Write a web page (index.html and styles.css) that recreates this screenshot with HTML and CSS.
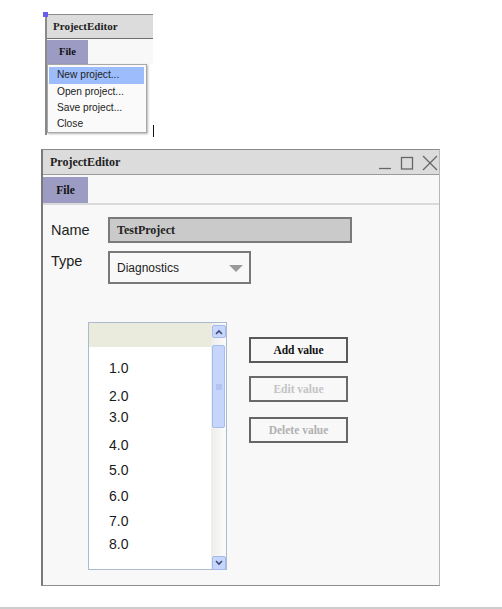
FILE: index.html
```html
<!DOCTYPE html>
<html>
<head>
<meta charset="utf-8">
<link rel="stylesheet" href="styles.css">
</head>
<body>
<div class="mini">
  <span class="handle"></span>
  <div class="mini-title">ProjectEditor</div>
  <div class="mini-menubar"><span class="mini-file">File</span></div>
  <div class="dropdown">
    <div class="dd-item active">New project...</div>
    <div class="dd-item">Open project...</div>
    <div class="dd-item">Save project...</div>
    <div class="dd-item">Close</div>
  </div>
  <span class="caret"></span>
</div>

<div class="window">
  <div class="titlebar">
    <span class="title">ProjectEditor</span>
    <svg class="controls" width="62" height="20" viewBox="0 0 62 20">
      <line x1="3" y1="15.5" x2="15" y2="15.5" stroke="#666" stroke-width="1.3"/>
      <rect x="25.5" y="4.5" width="11" height="11.5" fill="none" stroke="#666" stroke-width="1.3"/>
      <line x1="47" y1="3" x2="61" y2="17" stroke="#666" stroke-width="1.3"/>
      <line x1="61" y1="3" x2="47" y2="17" stroke="#666" stroke-width="1.3"/>
    </svg>
  </div>
  <div class="menubar"><span class="file-btn">File</span></div>
  <div class="content">
    <div class="form-row name-row">
      <span class="label">Name</span>
      <div class="textbox">TestProject</div>
    </div>
    <div class="form-row type-row">
      <span class="label type-label">Type</span>
      <div class="select">
        <span>Diagnostics</span>
        <span class="arrow"></span>
      </div>
    </div>
    <div class="list-area">
      <div class="listbox">
        <div class="list-col">
          <div class="list-header"></div>
          <div class="item">1.0</div>
          <div class="item">2.0</div>
          <div class="item">3.0</div>
          <div class="item">4.0</div>
          <div class="item">5.0</div>
          <div class="item">6.0</div>
          <div class="item">7.0</div>
          <div class="item">8.0</div>
        </div>
        <div class="scrollbar">
          <div class="sb-btn sb-up">
            <svg width="8" height="6" viewBox="0 0 8 6"><polyline points="1,5 4,2 7,5" fill="none" stroke="#3b4a78" stroke-width="1.6"/></svg>
          </div>
          <div class="sb-thumb">
            <svg width="6" height="6" viewBox="0 0 6 6"><line x1="0" y1="1" x2="6" y2="1" stroke="#9fb2e6"/><line x1="0" y1="3" x2="6" y2="3" stroke="#9fb2e6"/><line x1="0" y1="5" x2="6" y2="5" stroke="#9fb2e6"/></svg>
          </div>
          <div class="sb-spacer"></div>
          <div class="sb-btn sb-down">
            <svg width="8" height="6" viewBox="0 0 8 6"><polyline points="1,1 4,4 7,1" fill="none" stroke="#3b4a78" stroke-width="1.6"/></svg>
          </div>
        </div>
      </div>
      <div class="buttons">
        <div class="btn btn-add">Add value</div>
        <div class="btn btn-edit">Edit value</div>
        <div class="btn btn-delete">Delete value</div>
      </div>
    </div>
  </div>
</div>
<div class="baseline"></div>
</body>
</html>
```

FILE: styles.css
```css
* { box-sizing: border-box; }
html, body { margin: 0; padding: 0; }
body {
  width: 502px;
  height: 609px;
  background: #ffffff;
  overflow: hidden;
  font-family: "Liberation Sans", Arial, sans-serif;
}

/* ---------- mini window with open menu ---------- */
.mini {
  position: relative;
  margin: 14px 0 0 45px;
  width: 108px;
  height: 121px;
  border-left: 2px solid #8a8a8a;
}
.handle {
  position: absolute;
  left: -4px;
  top: -2px;
  width: 5px;
  height: 5px;
  background: #6a5cf0;
}
.mini-title {
  height: 25px;
  background: #dcdcdc;
  border-top: 1px solid #8c8c8c;
  border-bottom: 1px solid #6e6e6e;
  padding-left: 6px;
  font-family: "Liberation Serif", "Times New Roman", serif;
  font-weight: bold;
  font-size: 11px;
  line-height: 23px;
  color: #222;
}
.mini-menubar {
  height: 25px;
  background: #f8f8f8;
  padding-top: 1px;
  display: flex;
}
.mini-file {
  width: 41px;
  height: 24px;
  background: #9b9bc3;
  font-family: "Liberation Serif", "Times New Roman", serif;
  font-weight: bold;
  font-size: 10.5px;
  line-height: 24px;
  text-align: center;
  color: #111;
}
.dropdown {
  position: absolute;
  left: 0px;
  top: 50px;
  width: 100px;
  height: 69px;
  background: #fafafa;
  border: 1px solid #a8a8a8;
  box-shadow: 1px 1px 2px rgba(0,0,0,0.3);
  padding: 2px 2px 0 1px;
}
.dd-item {
  height: 16px;
  line-height: 16px;
  padding-left: 8px;
  font-size: 10.2px;
  color: #222;
}
.dd-item.active {
  height: 16.5px;
  background: #9cbcfb;
}
.caret {
  position: absolute;
  left: 106px;
  top: 111px;
  width: 1px;
  height: 12px;
  background: #111;
}

/* ---------- main window ---------- */
.window {
  margin: 14px 0 0 41px;
  width: 399px;
  height: 437px;
  border-top: 1px solid #8a8a8a;
  border-left: 2px solid #7a7a7a;
  border-right: 1px solid #b8b8b8;
  border-bottom: 1px solid #8e8e8e;
  background: #f8f8f8;
  display: flex;
  flex-direction: column;
}
.titlebar {
  height: 25px;
  background: #dcdcdc;
  border-bottom: 1px solid #9a9a9a;
  display: flex;
  align-items: center;
  justify-content: space-between;
  padding-left: 7px;
}
.title {
  font-family: "Liberation Serif", "Times New Roman", serif;
  font-weight: bold;
  font-size: 12px;
  color: #222;
}
.controls { margin-right: 1px; margin-top: 2px; }
.menubar {
  height: 30px;
  padding-top: 2px;
  border-bottom: 2px solid #dadada;
  display: flex;
  background: #f8f8f8;
}
.file-btn {
  width: 45px;
  height: 26px;
  background: #9b9bc3;
  font-family: "Liberation Serif", "Times New Roman", serif;
  font-weight: bold;
  font-size: 11.5px;
  line-height: 26px;
  text-align: center;
  color: #111;
}
.content {
  flex: 1;
  padding: 12px 0 0 8px;
  display: flex;
  flex-direction: column;
}
.form-row {
  display: flex;
}
.name-row { align-items: center; }
.type-row { margin-top: 8px; align-items: flex-start; }
.label {
  width: 57px;
  font-size: 14.5px;
  color: #1e1e1e;
}
.type-label { padding-top: 2px; }
.textbox {
  width: 244px;
  height: 26px;
  background: #cacaca;
  border: 2px solid #7a7a7a;
  padding-left: 7px;
  font-family: "Liberation Serif", "Times New Roman", serif;
  font-weight: bold;
  font-size: 12px;
  line-height: 22px;
  color: #222;
}
.select {
  width: 143px;
  height: 33px;
  border: 2px solid #787878;
  background: #f8f8f8;
  padding: 0 6px 0 7px;
  display: flex;
  align-items: center;
  justify-content: space-between;
  font-size: 12px;
  color: #222;
}
.arrow {
  width: 0;
  height: 0;
  border-left: 7px solid transparent;
  border-right: 7px solid transparent;
  border-top: 7px solid #9a9a9a;
  margin-top: 1px;
}

/* list */
.list-area {
  margin-top: 38px;
  margin-left: 37px;
  display: flex;
  align-items: flex-start;
}
.listbox {
  width: 139px;
  height: 248px;
  border: 1px solid #aabacf;
  background: #ffffff;
  display: flex;
}
.list-col {
  flex: 1;
  display: flex;
  flex-direction: column;
}
.list-header {
  height: 24px;
  background: #ebebdd;
}
.item {
  height: 20px;
  line-height: 20px;
  padding-left: 20px;
  font-size: 14px;
  color: #1a1a1a;
}
.item:nth-child(2) { margin-top: 11px; }
.item:nth-child(3) { margin-top: 7.6px; }
.item:nth-child(4) { margin-top: 1.7px; }
.item:nth-child(5) { margin-top: 7.3px; }
.item:nth-child(6) { margin-top: 5.7px; }
.item:nth-child(7) { margin-top: 5.3px; }
.item:nth-child(8) { margin-top: 5.7px; }
.item:nth-child(9) { margin-top: 2.3px; }

.scrollbar {
  width: 15px;
  background: linear-gradient(to right, #ecece8, #f6f6f4 60%, #fbfbfa);
  display: flex;
  flex-direction: column;
  align-items: center;
  padding: 2px 0 0 0;
}
.sb-btn {
  width: 14px;
  border: 1px solid #a7b9ea;
  border-radius: 2px;
  background: #c7d6fd;
  display: flex;
  align-items: center;
  justify-content: center;
}
.sb-up { height: 13px; }
.sb-down { height: 14px; margin-bottom: -1px; }
.sb-thumb {
  margin-top: 7px;
  width: 13px;
  height: 83px;
  border: 1px solid #a8bbee;
  border-radius: 2px;
  background: #c6d5fc;
  display: flex;
  align-items: center;
  justify-content: center;
}
.sb-spacer { flex: 1; }

.buttons {
  margin-left: 22px;
  margin-top: 15px;
  display: flex;
  flex-direction: column;
}
.btn {
  width: 99px;
  height: 26px;
  border: 2px solid #5a5a5a;
  background: #f8f8f8;
  font-family: "Liberation Serif", "Times New Roman", serif;
  font-weight: bold;
  font-size: 11.5px;
  line-height: 22px;
  text-align: center;
  color: #111;
}
.btn-edit { margin-top: 13px; color: #c4c4c4; border-color: #6a6a6a; }
.btn-delete { margin-top: 15px; color: #b0b0b0; border-color: #666; }

.baseline {
  margin-top: 21px;
  height: 2px;
  background: #cdcdcd;
}
```
